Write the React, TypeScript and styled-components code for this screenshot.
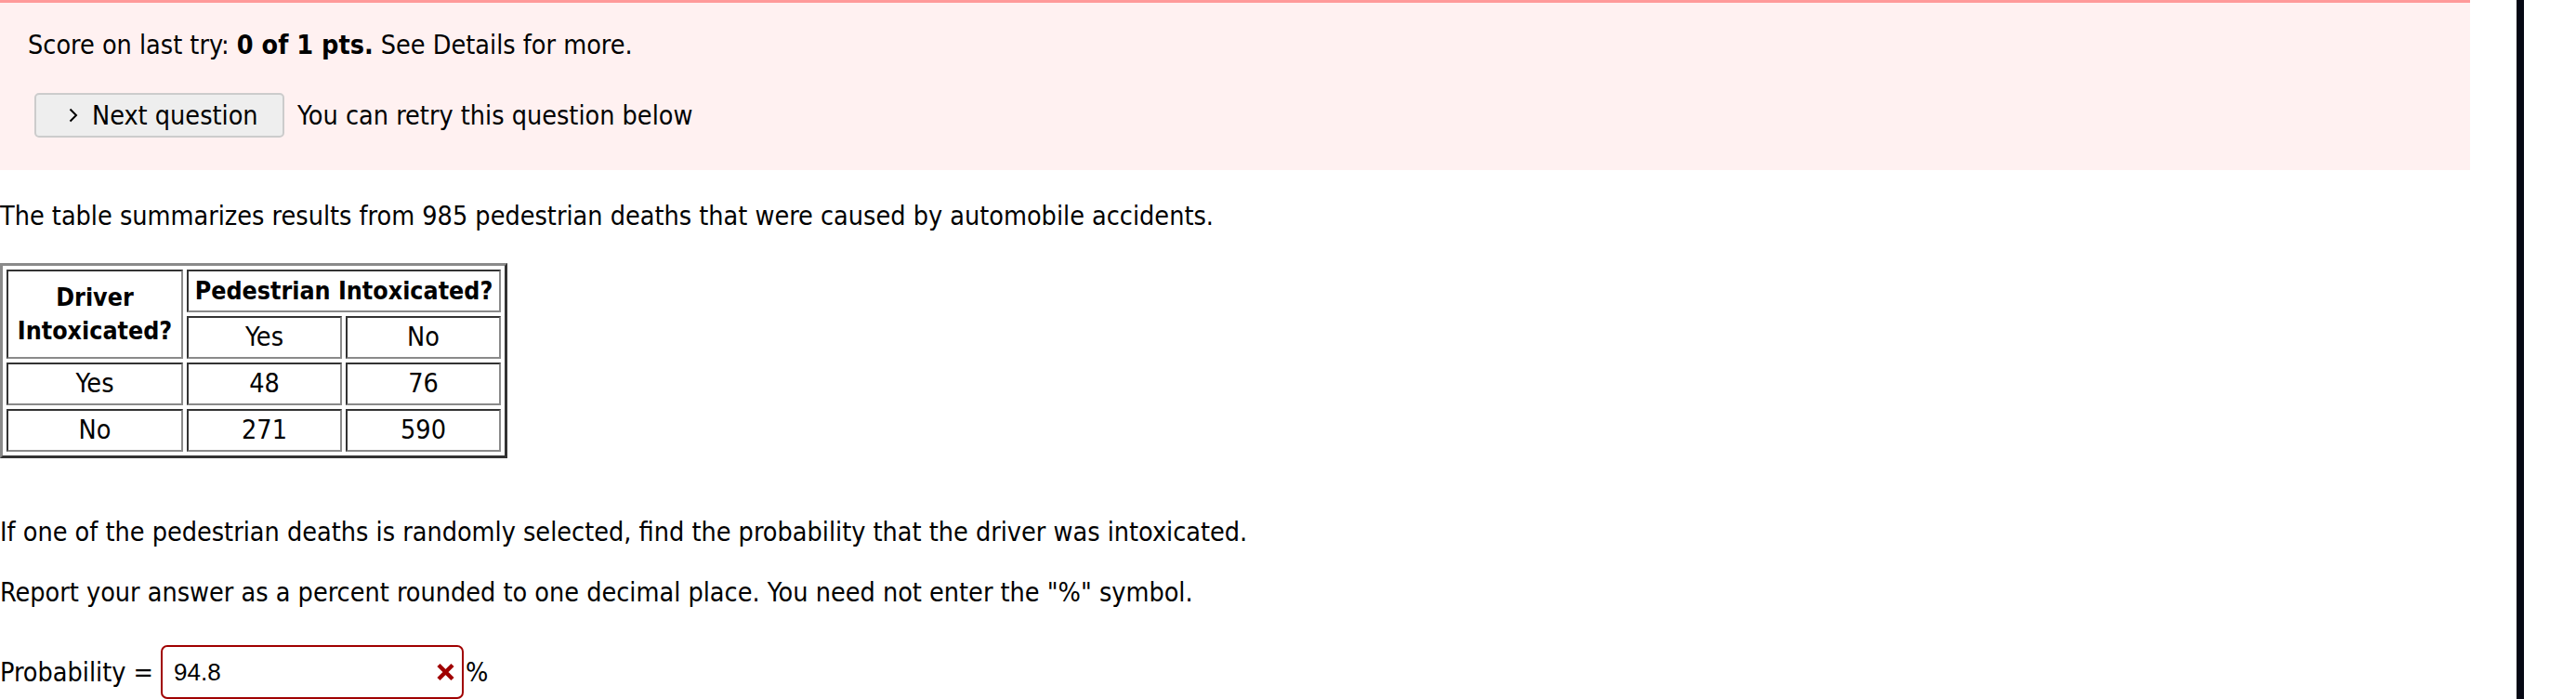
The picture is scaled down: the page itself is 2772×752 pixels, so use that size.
import React from "react";
import styled, { createGlobalStyle } from "styled-components";

const Global = createGlobalStyle`
  html, body { margin: 0; padding: 0; background: #ffffff; }
  body {
    font-family: "DejaVu Sans Condensed", "DejaVu Sans", sans-serif;
    font-size: 28.5px;
    color: #000;
  }
`;

const Page = styled.div`
  display: flex;
  height: 752px;
  overflow: hidden;
`;

const Main = styled.main`
  flex: 0 0 2658px;
  display: flex;
  flex-direction: column;
`;

const EdgeBar = styled.div`
  flex: 0 0 8px;
  margin-left: 50px;
  background: #060814;
`;

const Alert = styled.section`
  background: #fff1f1;
  border-top: 3px solid #ff9a9a;
  padding: 28px 30px 35px 30px;
`;

const ScoreLine = styled.p`
  margin: 0;
  line-height: 36px;
`;

const ActionRow = styled.div`
  display: flex;
  align-items: center;
  gap: 14px;
  margin-top: 33px;
`;

const NextButton = styled.button`
  display: inline-flex;
  align-items: center;
  gap: 14px;
  height: 48px;
  width: 269px;
  margin-left: 7px;
  padding: 0 0 0 34px;
  box-sizing: border-box;
  background: #eeeeee;
  border: 2px solid #cccccc;
  border-radius: 5px;
  font: inherit;
  color: #000;
`;

const Chevron = styled.svg`
  width: 12px;
  height: 16px;
`;

const Text = styled.p<{ $top: number }>`
  margin: ${(p) => p.$top}px 0 0 0;
  line-height: 36px;
`;

const DataTable = styled.table`
  margin-top: 32px;
  border: 3px solid;
  border-color: #8a8a8a #333333 #333333 #8a8a8a;
  border-spacing: 4px;
  width: 546px;
  table-layout: fixed;
  box-sizing: border-box;
`;

const Cell = styled.td<{ $bold?: boolean }>`
  border: 2px solid;
  border-color: #333333 #8a8a8a #8a8a8a #333333;
  text-align: center;
  padding: 3px 0;
  line-height: 36px;
  font-weight: ${(p) => (p.$bold ? "bold" : "normal")};
  font-size: ${(p) => (p.$bold ? "26.6px" : "inherit")};
  white-space: nowrap;
  overflow: hidden;
`;

const HeadCell = styled(Cell).attrs({ as: "th" })``;

const Col = styled.col<{ $w: number }>`
  width: ${(p) => p.$w}px;
`;

const AnswerRow = styled.div`
  display: flex;
  align-items: center;
  margin-top: 38px;
`;

const Label = styled.span`
  margin-right: 8px;
`;

const InputBox = styled.div`
  display: flex;
  align-items: center;
  width: 326px;
  height: 58px;
  box-sizing: border-box;
  border: 2px solid #a00000;
  border-radius: 7px;
  padding: 0 12px;
  font-family: "Liberation Sans", Arial, sans-serif;
  font-size: 26px;
`;

const Value = styled.span`
  flex: 1;
`;

const WrongMark = styled.svg`
  width: 21px;
  height: 20px;
  margin-right: -5px;
`;

const Percent = styled.span`
  margin-left: 2px;
`;

export default function App() {
  return (
    <>
      <Global />
      <Page>
        <Main>
          <Alert>
            <ScoreLine>
              Score on last try: <b>0 of 1 pts.</b> See Details for more.
            </ScoreLine>
            <ActionRow>
              <NextButton type="button">
                <Chevron viewBox="0 0 12 16">
                  <path d="M2.5 1.5 L9 8 L2.5 14.5" fill="none" stroke="#000" strokeWidth="2" />
                </Chevron>
                Next question
              </NextButton>
              <span>You can retry this question below</span>
            </ActionRow>
          </Alert>

          <Text $top={32}>
            The table summarizes results from 985 pedestrian deaths that were caused by automobile accidents.
          </Text>

          <DataTable>
            <colgroup>
              <Col $w={190} />
              <Col $w={167} />
              <Col $w={167} />
            </colgroup>
            <tbody>
              <tr>
                <HeadCell rowSpan={2} $bold>
                  Driver
                  <br />
                  Intoxicated?
                </HeadCell>
                <HeadCell colSpan={2} $bold>
                  Pedestrian Intoxicated?
                </HeadCell>
              </tr>
              <tr>
                <Cell>Yes</Cell>
                <Cell>No</Cell>
              </tr>
              <tr>
                <Cell>Yes</Cell>
                <Cell>48</Cell>
                <Cell>76</Cell>
              </tr>
              <tr>
                <Cell>No</Cell>
                <Cell>271</Cell>
                <Cell>590</Cell>
              </tr>
            </tbody>
          </DataTable>

          <Text $top={62}>
            If one of the pedestrian deaths is randomly selected, find the probability that the driver was intoxicated.
          </Text>
          <Text $top={29}>
            Report your answer as a percent rounded to one decimal place. You need not enter the "%" symbol.
          </Text>

          <AnswerRow>
            <Label>Probability =</Label>
            <InputBox>
              <Value>94.8</Value>
              <WrongMark viewBox="0 0 21 20">
                <path d="M3 2.5 L18 17.5 M18 2.5 L3 17.5" stroke="#a00000" strokeWidth="4.5" />
              </WrongMark>
            </InputBox>
            <Percent>%</Percent>
          </AnswerRow>
        </Main>
        <EdgeBar />
      </Page>
    </>
  );
}
